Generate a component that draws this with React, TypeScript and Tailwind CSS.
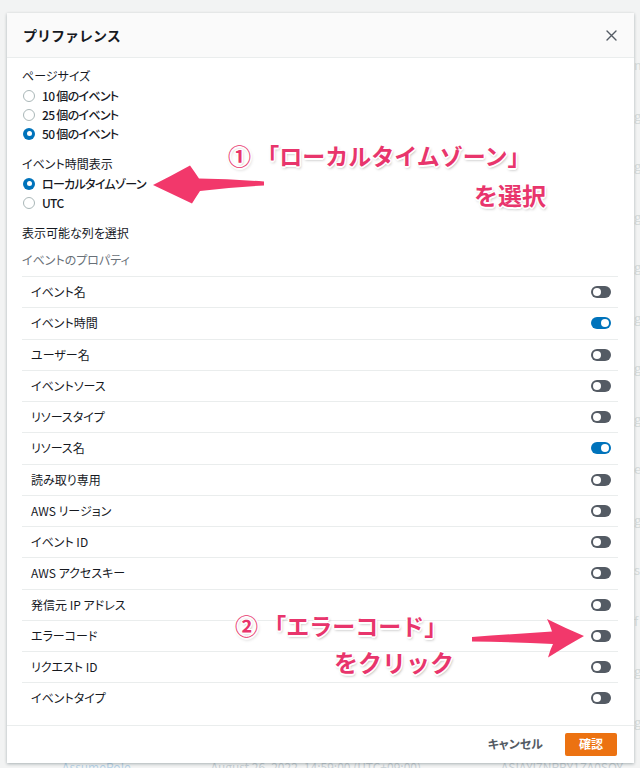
import React from "react";

const columns: { label: string; on: boolean }[] = [
  { label: "イベント名", on: false },
  { label: "イベント時間", on: true },
  { label: "ユーザー名", on: false },
  { label: "イベントソース", on: false },
  { label: "リソースタイプ", on: false },
  { label: "リソース名", on: true },
  { label: "読み取り専用", on: false },
  { label: "AWS リージョン", on: false },
  { label: "イベント ID", on: false },
  { label: "AWS アクセスキー", on: false },
  { label: "発信元 IP アドレス", on: false },
  { label: "エラーコード", on: false },
  { label: "リクエスト ID", on: false },
  { label: "イベントタイプ", on: false },
];

function Radio({ label, checked }: { label: string; checked?: boolean }) {
  return (
    <div className="flex h-[19px] items-center gap-[7px] pl-[1px]">
      {checked ? (
        <span className="flex h-[12px] w-[12px] items-center justify-center rounded-full bg-[#0073bb]">
          <span className="h-[5px] w-[5px] rounded-full bg-white" />
        </span>
      ) : (
        <span className="h-[12px] w-[12px] rounded-full border border-[#aab7b8] bg-white" />
      )}
      <span className="text-[12px] font-medium tracking-[-0.7px] text-[#16191f]">{label}</span>
    </div>
  );
}

function Toggle({ on }: { on: boolean }) {
  return (
    <span
      className={
        on
          ? "flex h-[12px] w-[20px] items-center justify-end rounded-full bg-[#0073bb] px-[2px]"
          : "flex h-[12px] w-[20px] items-center justify-start rounded-full bg-[#545b64] px-[2px]"
      }
    >
      <span className="h-[8px] w-[8px] rounded-full bg-white" />
    </span>
  );
}

const note =
  "[text-shadow:1.5px_0_0_#fff,-1.5px_0_0_#fff,0_1.5px_0_#fff,0_-1.5px_0_#fff,1px_1px_0_#fff,-1px_-1px_0_#fff,1px_-1px_0_#fff,-1px_1px_0_#fff,1px_2px_3px_rgba(0,0,0,0.35)]";

export default function App() {
  return (
    <div
      className="relative h-[768px] w-[640px] overflow-hidden bg-[#f2f3f3]"
      style={{ fontFamily: '"Noto Sans CJK JP", "Noto Sans", sans-serif' }}
    >
      {/* faint page behind the dialog */}
      <div className="absolute left-[634px] top-[55px] flex flex-col gap-[31px] text-[13px] text-[#d5dbdb]">
        <span>m</span>
        <span>g</span>
        <span>g</span>
        <span>g</span>
        <span>g</span>
        <span>g</span>
        <span>g</span>
        <span>g</span>
        <span>e</span>
        <span>g</span>
        <span>s</span>
        <span>f</span>
        <span>g</span>
        <span>g</span>
        <span>g</span>
      </div>
      <div className="absolute left-[62px] top-[758px] flex gap-[80px] whitespace-nowrap text-[12px] text-[#c9d1d6]">
        <span className="text-[#b9d3e8]">AssumeRole</span>
        <span>August 26, 2022, 14:59:00 (UTC+09:00)</span>
        <span>ASIAYI7NPBY1ZA0SQY</span>
      </div>

      <div className="relative z-10 pl-[7px] pt-[13px] [font-feature-settings:'palt']">
        <div className="w-[627px] bg-white shadow-[0_1px_3px_rgba(0,28,36,0.3)]">
          {/* header */}
          <div className="flex h-[45px] items-center justify-between border-b border-[#eaeded] bg-[#fafafa] pl-[16px] pr-[17px]">
            <h2 className="text-[14px] font-bold text-[#16191f] [font-feature-settings:normal]">プリファレンス</h2>
            <svg width="11" height="11" viewBox="0 0 11 11" className="text-[#545b64]">
              <path d="M1 1L10 10M10 1L1 10" stroke="currentColor" strokeWidth="1.4" strokeLinecap="round" />
            </svg>
          </div>

          {/* body */}
          <div className="px-[15px] pb-[11px] pt-[8px]">
            <div className="flex h-[20px] items-center text-[12px] text-[#16191f]">ページサイズ</div>
            <Radio label="10 個のイベント" />
            <Radio label="25 個のイベント" />
            <Radio label="50 個のイベント" checked />

            <div className="mt-[11px] flex h-[20px] items-center text-[12px] text-[#16191f]">イベント時間表示</div>
            <Radio label="ローカルタイムゾーン" checked />
            <Radio label="UTC" />

            <div className="mt-[11px] flex h-[20px] items-center text-[12px] text-[#16191f]">表示可能な列を選択</div>
            <div className="mt-[7px] flex h-[20px] items-center text-[12px] text-[#687078]">イベントのプロパティ</div>

            <div className="mr-[1px] mt-[6px]">
              {columns.map((c) => (
                <div
                  key={c.label}
                  className="flex h-[31.25px] items-center justify-between border-t border-[#eaeded] pl-[9px] pr-[7px]"
                >
                  <span className="text-[12px] text-[#16191f]">{c.label}</span>
                  <Toggle on={c.on} />
                </div>
              ))}
            </div>
          </div>

          {/* footer */}
          <div className="flex h-[38px] items-center justify-end gap-[22px] border-t border-[#eaeded] pr-[17px]">
            <button className="text-[12px] font-bold text-[#545b64]">キャンセル</button>
            <button className="h-[23px] w-[52px] rounded-[2px] bg-[#ec7211] text-[12px] font-bold text-white">
              確認
            </button>
          </div>
        </div>
      </div>

      {/* annotation 1 */}
      <div className={"absolute left-[228px] top-[139px] z-20 whitespace-nowrap text-[23px] font-bold leading-[32px] text-[#e8356c] " + note}>
        ① 「ローカルタイムゾーン」
      </div>
      <div className={"absolute left-[474px] top-[179px] z-20 whitespace-nowrap text-[24px] font-bold leading-[32px] text-[#e8356c] " + note}>
        を選択
      </div>
      <svg className="absolute left-0 top-0 z-20" width="640" height="768" viewBox="0 0 640 768">
        <path
          d="M264,181.5 Q230,179 199,178.5 Q194,171 190,165.5 Q171,176 153,185 Q172,194 192,203.5 Q196,197 200,191 Q232,187 264,185.5 Z"
          fill="#f2386b"
        />
        <path
          d="M472,637 Q512,634 552,631.5 Q550,625 547,619 Q565,628 584,636 Q566,646 548,657.5 Q550,650 553,644 Q512,642 472,641.5 Z"
          fill="#f2386b"
        />
      </svg>

      {/* annotation 2 */}
      <div className={"absolute left-[235px] top-[609px] z-20 whitespace-nowrap text-[23px] font-bold leading-[32px] text-[#e8356c] " + note}>
        ② 「エラーコード」
      </div>
      <div className={"absolute left-[334px] top-[646px] z-20 whitespace-nowrap text-[24px] font-bold leading-[32px] text-[#e8356c] " + note}>
        をクリック
      </div>
    </div>
  );
}
